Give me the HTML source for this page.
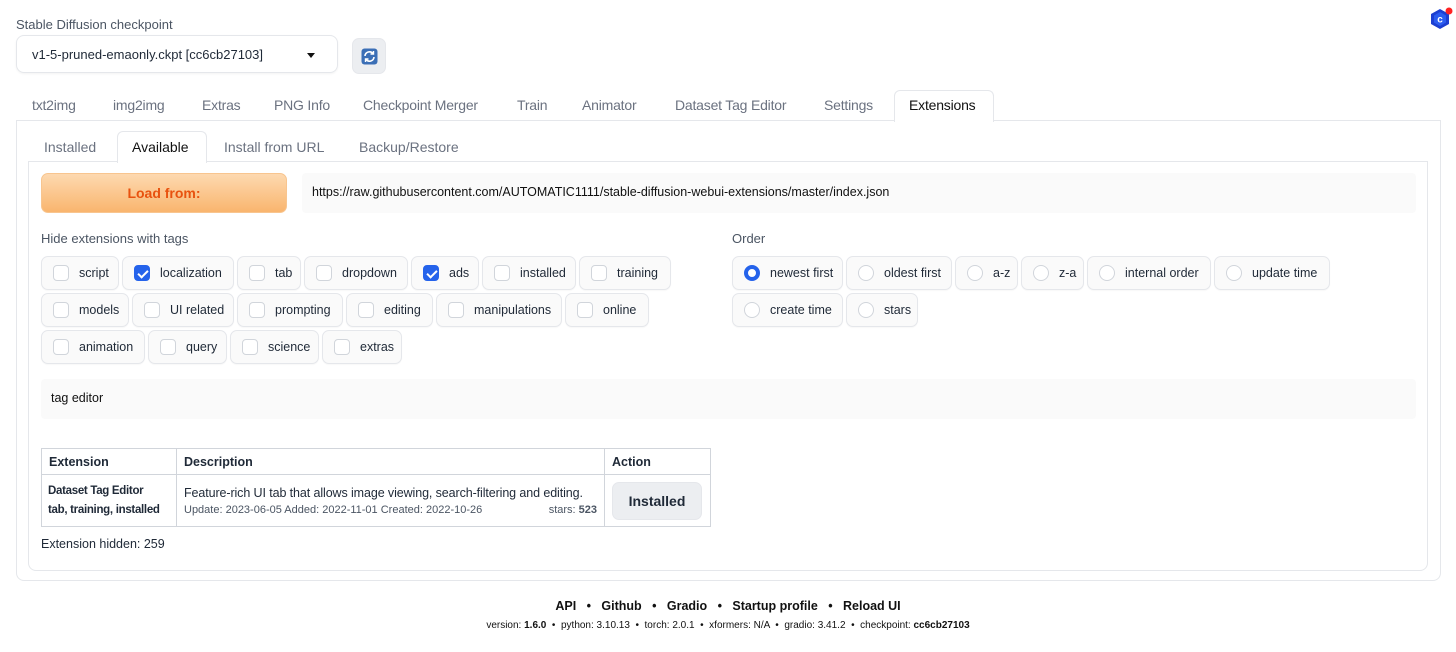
<!DOCTYPE html>
<html><head><meta charset="utf-8"><style>
*{box-sizing:border-box;margin:0;padding:0}
body{width:1456px;height:652px;background:#fff;font-family:"Liberation Sans",sans-serif;color:#1f2937;position:relative;overflow:hidden;font-size:13px}
.a{position:absolute}
.lbl{color:#4b5563;font-size:13px}
.tab{position:absolute;top:97px;font-size:14px;color:#6b7280;letter-spacing:-0.2px}
.st{position:absolute;top:139px;font-size:14px;color:#6b7280}
.chip{position:absolute;height:34px;border:1px solid #e5e7eb;border-radius:7px;background:#fafafa;display:flex;align-items:center;padding-left:11px;font-size:12.5px;color:#1f2937;white-space:nowrap;box-shadow:0 1px 1px rgba(0,0,0,.03)}
.cb{width:16px;height:16px;border:1px solid #d1d5db;border-radius:4px;background:#fff;margin-right:10px;flex:none}
.cb.on{background:#2563eb;border-color:#2563eb;position:relative}
.cb.on:after{content:"";position:absolute;left:5px;top:2px;width:4px;height:8px;border:solid #fff;border-width:0 2px 2px 0;transform:rotate(45deg)}
.rd{width:16px;height:16px;border:1px solid #d1d5db;border-radius:50%;background:#fff;margin-right:10px;flex:none}
.rd.on{border:4.5px solid #2563eb}
table{border-collapse:collapse;font-size:12.5px;table-layout:fixed}
td,th{border:1px solid #d1d5db;text-align:left;padding:0 7px;white-space:nowrap;overflow:hidden}
</style></head><body>
<div class="a lbl" style="left:16px;top:17px">Stable Diffusion checkpoint</div>
<div class="a" style="left:16px;top:35px;width:322px;height:38px;border:1px solid #e5e7eb;border-radius:8px;box-shadow:0 1px 2px rgba(0,0,0,.05)">
<span class="a" style="left:15px;top:11px;font-size:13px">v1-5-pruned-emaonly.ckpt [cc6cb27103]</span>
<span class="a" style="left:290px;top:17px;width:0;height:0;border-left:4px solid transparent;border-right:4px solid transparent;border-top:5px solid #111"></span></div>
<div class="a" style="left:352px;top:38px;width:34px;height:36px;border-radius:7px;background:#eceef1;border:1px solid #e5e7eb">
<svg class="a" style="left:8px;top:9px" width="17" height="17" viewBox="0 0 17 17"><rect x=".5" y=".5" width="16" height="16" rx="3" fill="#3b6fb6"/><path d="M4 8a4.5 4.5 0 0 1 8-2.5M13 9a4.5 4.5 0 0 1-8 2.5" stroke="#fff" stroke-width="1.6" fill="none"/><path d="M12.5 3v3h-3M4.5 14v-3h3" stroke="#fff" stroke-width="1.4" fill="none"/></svg></div>
<svg class="a" style="left:1429px;top:7px" width="24" height="24" viewBox="0 0 24 24"><path d="M11 2l9 5v10l-9 5-9-5V7z" fill="#1d3fd1"/><path d="M11 5l6 3.5v7L11 19l-6-3.5v-7z" fill="#2b5cf0"/><text x="11" y="15.5" font-size="10" font-weight="bold" fill="#fff" text-anchor="middle" font-family="Liberation Sans">c</text><circle cx="20" cy="4" r="3.5" fill="#f22"/></svg>

<div class="tab" style="left:32px">txt2img</div>
<div class="tab" style="left:113px">img2img</div>
<div class="tab" style="left:202px">Extras</div>
<div class="tab" style="left:274px">PNG Info</div>
<div class="tab" style="left:363px">Checkpoint Merger</div>
<div class="tab" style="left:517px">Train</div>
<div class="tab" style="left:582px">Animator</div>
<div class="tab" style="left:675px">Dataset Tag Editor</div>
<div class="tab" style="left:824px">Settings</div>
<div class="a" style="left:16px;top:120px;width:1425px;height:461px;border:1px solid #e5e7eb;border-radius:0 0 8px 8px"></div>
<div class="a" style="left:894px;top:90px;width:100px;height:32px;border:1px solid #e5e7eb;border-bottom:none;border-radius:6px 6px 0 0;background:#fff"></div>
<div class="tab" style="left:909px;color:#111">Extensions</div>

<div class="st" style="left:44px">Installed</div>
<div class="st" style="left:224px">Install from URL</div>
<div class="st" style="left:359px">Backup/Restore</div>
<div class="a" style="left:28px;top:161px;width:1400px;height:410px;border:1px solid #e5e7eb;border-radius:0 0 8px 8px"></div>
<div class="a" style="left:117px;top:131px;width:90px;height:32px;border:1px solid #e5e7eb;border-bottom:none;border-radius:6px 6px 0 0;background:#fff"></div>
<div class="st" style="left:132px;color:#111">Available</div>

<div class="a" style="left:41px;top:173px;width:246px;height:40px;border-radius:7px;background:linear-gradient(#fdd9b0,#f9b56e);border:1px solid #f8c58f;color:#e8520f;font-weight:bold;font-size:14px;text-align:center;line-height:38px">Load from:</div>
<div class="a" style="left:302px;top:173px;width:1114px;height:40px;background:#fafafa;border-radius:4px;padding:12px 10px;font-size:12.5px;color:#111">https://raw.githubusercontent.com/AUTOMATIC1111/stable-diffusion-webui-extensions/master/index.json</div>

<div class="a lbl" style="left:41px;top:231px">Hide extensions with tags</div>
<div class="a lbl" style="left:732px;top:231px">Order</div>

<div class="chip" style="left:41px;top:256px;width:78px"><i class="cb"></i>script</div>
<div class="chip" style="left:122px;top:256px;width:112px"><i class="cb on"></i>localization</div>
<div class="chip" style="left:237px;top:256px;width:64px"><i class="cb"></i>tab</div>
<div class="chip" style="left:304px;top:256px;width:104px"><i class="cb"></i>dropdown</div>
<div class="chip" style="left:411px;top:256px;width:68px"><i class="cb on"></i>ads</div>
<div class="chip" style="left:482px;top:256px;width:94px"><i class="cb"></i>installed</div>
<div class="chip" style="left:579px;top:256px;width:92px"><i class="cb"></i>training</div>
<div class="chip" style="left:41px;top:293px;width:88px"><i class="cb"></i>models</div>
<div class="chip" style="left:132px;top:293px;width:102px"><i class="cb"></i>UI related</div>
<div class="chip" style="left:237px;top:293px;width:106px"><i class="cb"></i>prompting</div>
<div class="chip" style="left:346px;top:293px;width:87px"><i class="cb"></i>editing</div>
<div class="chip" style="left:436px;top:293px;width:126px"><i class="cb"></i>manipulations</div>
<div class="chip" style="left:565px;top:293px;width:84px"><i class="cb"></i>online</div>
<div class="chip" style="left:41px;top:330px;width:104px"><i class="cb"></i>animation</div>
<div class="chip" style="left:148px;top:330px;width:79px"><i class="cb"></i>query</div>
<div class="chip" style="left:230px;top:330px;width:89px"><i class="cb"></i>science</div>
<div class="chip" style="left:322px;top:330px;width:80px"><i class="cb"></i>extras</div>

<div class="chip" style="left:732px;top:256px;width:111px"><i class="rd on"></i>newest first</div>
<div class="chip" style="left:846px;top:256px;width:106px"><i class="rd"></i>oldest first</div>
<div class="chip" style="left:955px;top:256px;width:63px"><i class="rd"></i>a-z</div>
<div class="chip" style="left:1021px;top:256px;width:63px"><i class="rd"></i>z-a</div>
<div class="chip" style="left:1087px;top:256px;width:124px"><i class="rd"></i>internal order</div>
<div class="chip" style="left:1214px;top:256px;width:116px"><i class="rd"></i>update time</div>
<div class="chip" style="left:732px;top:293px;width:111px"><i class="rd"></i>create time</div>
<div class="chip" style="left:846px;top:293px;width:72px"><i class="rd"></i>stars</div>

<div class="a" style="left:41px;top:379px;width:1375px;height:40px;background:#fafafa;border-radius:4px;padding:12px 10px;font-size:12.5px;color:#111">tag editor</div>

<table class="a" style="left:41px;top:448px;width:669px">
<colgroup><col style="width:135px"><col style="width:428px"><col style="width:106px"></colgroup>
<tr style="height:26px"><th>Extension</th><th>Description</th><th>Action</th></tr>
<tr style="height:52px"><td style="font-weight:bold;line-height:19px;font-size:11.5px;letter-spacing:-0.3px;padding:0 6px">Dataset Tag Editor<br>tab, training, installed</td>
<td><div style="letter-spacing:-0.1px">Feature-rich UI tab that allows image viewing, search-filtering and editing.</div><div style="font-size:11px;color:#4b5563;margin-top:4px;display:flex;justify-content:space-between"><span>Update: 2023-06-05 Added: 2022-11-01 Created: 2022-10-26</span><span>stars: <b>523</b></span></div></td>
<td><div style="width:90px;height:38px;background:#eceef1;border:1px solid #e5e7eb;border-radius:7px;font-size:14px;font-weight:bold;text-align:center;line-height:36px">Installed</div></td></tr>
</table>
<div class="a" style="left:41px;top:537px;font-size:12.5px">Extension hidden: 259</div>

<div class="a" style="left:0;top:599px;width:1456px;text-align:center;font-size:12.5px;font-weight:bold;color:#111">API &nbsp;&nbsp;•&nbsp;&nbsp; Github &nbsp;&nbsp;•&nbsp;&nbsp; Gradio &nbsp;&nbsp;•&nbsp;&nbsp; Startup profile &nbsp;&nbsp;•&nbsp;&nbsp; Reload UI</div>
<div class="a" style="left:0;top:620px;width:1456px;text-align:center;font-size:10px;color:#111">version: <b>1.6.0</b> &nbsp;•&nbsp; python: 3.10.13 &nbsp;•&nbsp; torch: 2.0.1 &nbsp;•&nbsp; xformers: N/A &nbsp;•&nbsp; gradio: 3.41.2 &nbsp;•&nbsp; checkpoint: <b>cc6cb27103</b></div>
</body></html>
